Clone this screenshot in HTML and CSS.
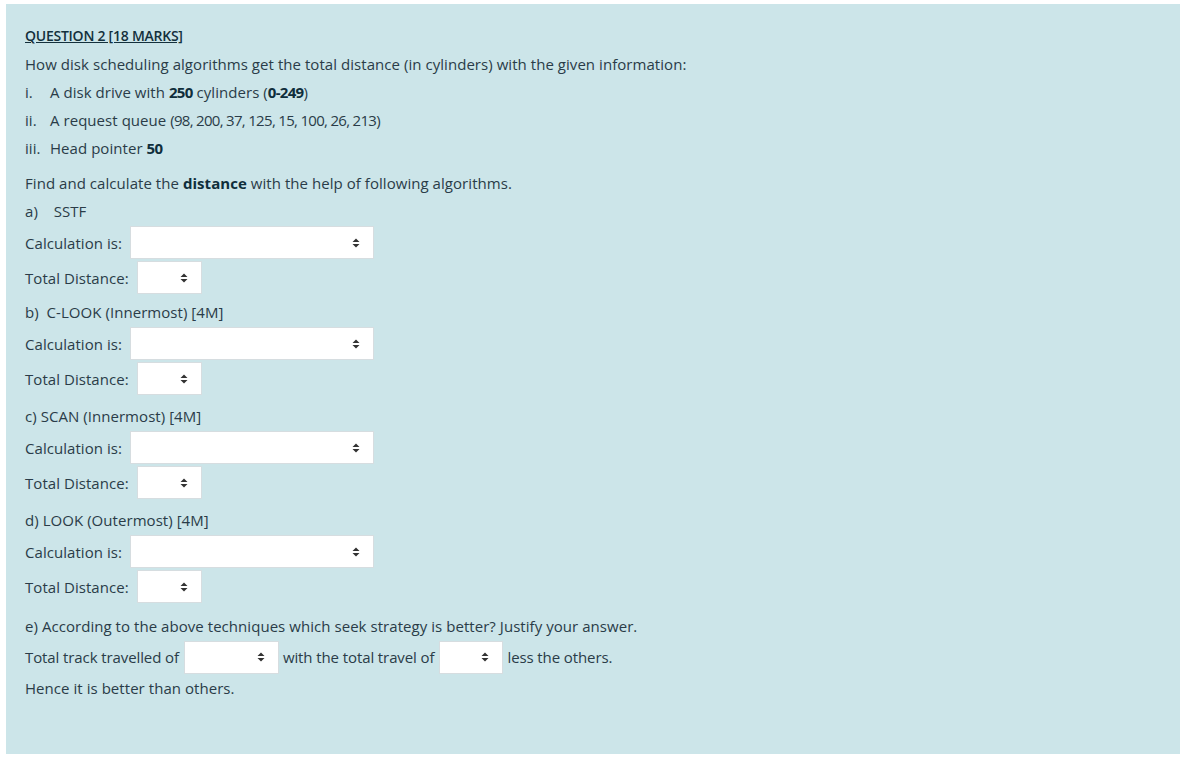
FILE: index.html
```html
<!DOCTYPE html>
<html>
<head>
<meta charset="utf-8">
<link rel="stylesheet" href="styles.css">
</head>
<body>
<div class="panel">
  <div class="title">QUESTION 2 [18 MARKS]</div>
  <p class="line intro">How disk scheduling algorithms get the total distance (in cylinders) with the given information:</p>
  <div class="item"><span class="num">i.</span><span>A disk drive with <b class="nums">250</b> cylinders (<b class="nums">0-249</b>)</span></div>
  <div class="item"><span class="num">ii.</span><span>A request queue <span class="nums">(98, 200, 37, 125, 15, 100, 26, 213)</span></span></div>
  <div class="item"><span class="num">iii.</span><span>Head pointer <b class="nums">50</b></span></div>

  <p class="line find">Find and calculate the <b>distance</b> with the help of following algorithms.</p>

  <div class="section">
    <div class="head">a)&nbsp;&nbsp;&nbsp; SSTF</div>
    <div class="row"><span class="label">Calculation is:</span><span class="sel wide"><svg width="8" height="10" viewBox="0 0 8 10"><path d="M4 0.5 L7.5 4 L0.5 4 Z M4 9.5 L7.5 6 L0.5 6 Z" fill="#333"/></svg></span></div>
    <div class="row"><span class="label">Total Distance:</span><span class="sel narrow"><svg width="8" height="10" viewBox="0 0 8 10"><path d="M4 0.5 L7.5 4 L0.5 4 Z M4 9.5 L7.5 6 L0.5 6 Z" fill="#333"/></svg></span></div>
  </div>

  <div class="section sb">
    <div class="head">b)&nbsp; C-LOOK (Innermost) [4M]</div>
    <div class="row"><span class="label">Calculation is:</span><span class="sel wide"><svg width="8" height="10" viewBox="0 0 8 10"><path d="M4 0.5 L7.5 4 L0.5 4 Z M4 9.5 L7.5 6 L0.5 6 Z" fill="#333"/></svg></span></div>
    <div class="row"><span class="label">Total Distance:</span><span class="sel narrow"><svg width="8" height="10" viewBox="0 0 8 10"><path d="M4 0.5 L7.5 4 L0.5 4 Z M4 9.5 L7.5 6 L0.5 6 Z" fill="#333"/></svg></span></div>
  </div>

  <div class="section sc">
    <div class="head">c) SCAN (Innermost) [4M]</div>
    <div class="row"><span class="label">Calculation is:</span><span class="sel wide"><svg width="8" height="10" viewBox="0 0 8 10"><path d="M4 0.5 L7.5 4 L0.5 4 Z M4 9.5 L7.5 6 L0.5 6 Z" fill="#333"/></svg></span></div>
    <div class="row"><span class="label">Total Distance:</span><span class="sel narrow"><svg width="8" height="10" viewBox="0 0 8 10"><path d="M4 0.5 L7.5 4 L0.5 4 Z M4 9.5 L7.5 6 L0.5 6 Z" fill="#333"/></svg></span></div>
  </div>

  <div class="section sc">
    <div class="head">d) LOOK (Outermost) [4M]</div>
    <div class="row"><span class="label">Calculation is:</span><span class="sel wide"><svg width="8" height="10" viewBox="0 0 8 10"><path d="M4 0.5 L7.5 4 L0.5 4 Z M4 9.5 L7.5 6 L0.5 6 Z" fill="#333"/></svg></span></div>
    <div class="row"><span class="label">Total Distance:</span><span class="sel narrow"><svg width="8" height="10" viewBox="0 0 8 10"><path d="M4 0.5 L7.5 4 L0.5 4 Z M4 9.5 L7.5 6 L0.5 6 Z" fill="#333"/></svg></span></div>
  </div>

  <div class="section final">
    <div class="head">e) According to the above techniques which seek strategy is better? Justify your answer.</div>
    <div class="row last"><span class="label">Total track travelled of</span><span class="sel s1"><svg width="8" height="10" viewBox="0 0 8 10"><path d="M4 0.5 L7.5 4 L0.5 4 Z M4 9.5 L7.5 6 L0.5 6 Z" fill="#333"/></svg></span><span class="label mid">with the total travel of</span><span class="sel s2"><svg width="8" height="10" viewBox="0 0 8 10"><path d="M4 0.5 L7.5 4 L0.5 4 Z M4 9.5 L7.5 6 L0.5 6 Z" fill="#333"/></svg></span><span class="label mid">less the others.</span></div>
    <p class="line">Hence it is better than others.</p>
  </div>
</div>
</body>
</html>
```

FILE: styles.css
```css
html, body {
  margin: 0;
  padding: 0;
  background: #ffffff;
}
body {
  font-family: "Open Sans", "Noto Sans", sans-serif;
  font-size: 15px;
  letter-spacing: 0.05px;
  color: #2a3c48;
}
.panel {
  margin: 4px 12px 7px 6px;
  background: #cce5e9;
  height: 750px;
  box-sizing: border-box;
  padding: 22px 18px 0 19px;
}
.title {
  font-size: 14px;
  font-weight: 600;
  color: #13303c;
  text-decoration: underline;
  letter-spacing: -0.25px;
  line-height: 20px;
  height: 20px;
}
.line {
  margin: 0;
  line-height: 28px;
  height: 28px;
}
.intro { margin-top: 4px; }
b { color: #0f2e3b; font-weight: 700; }
.nums { letter-spacing: -0.7px; }
.item {
  display: flex;
  align-items: center;
  height: 28px;
}
.num { width: 25px; }
.find { margin-top: 7px; }
.head {
  height: 28px;
  line-height: 28px;
}
.section.sb { margin-top: 3px; }
.section.sc { margin-top: 6px; }
.section.final { margin-top: 8px; }
.row {
  display: flex;
  align-items: center;
  height: 35px;
}
.row.last { height: 34px; }
.label { margin-right: 8px; }
.row.last .label { margin-right: 5px; letter-spacing: -0.1px; }
.row.last .label.mid { margin-left: 4px; margin-right: 5px; }
.sel {
  display: inline-flex;
  align-items: center;
  justify-content: flex-end;
  background: #ffffff;
  border: 1px solid #d6dde0;
  height: 33px;
  box-sizing: border-box;
  padding-right: 13px;
}
.sel.wide { width: 244px; }
.sel.narrow { width: 65px; }
.sel.s1 { width: 95px; }
.sel.s2 { width: 64px; }
```
